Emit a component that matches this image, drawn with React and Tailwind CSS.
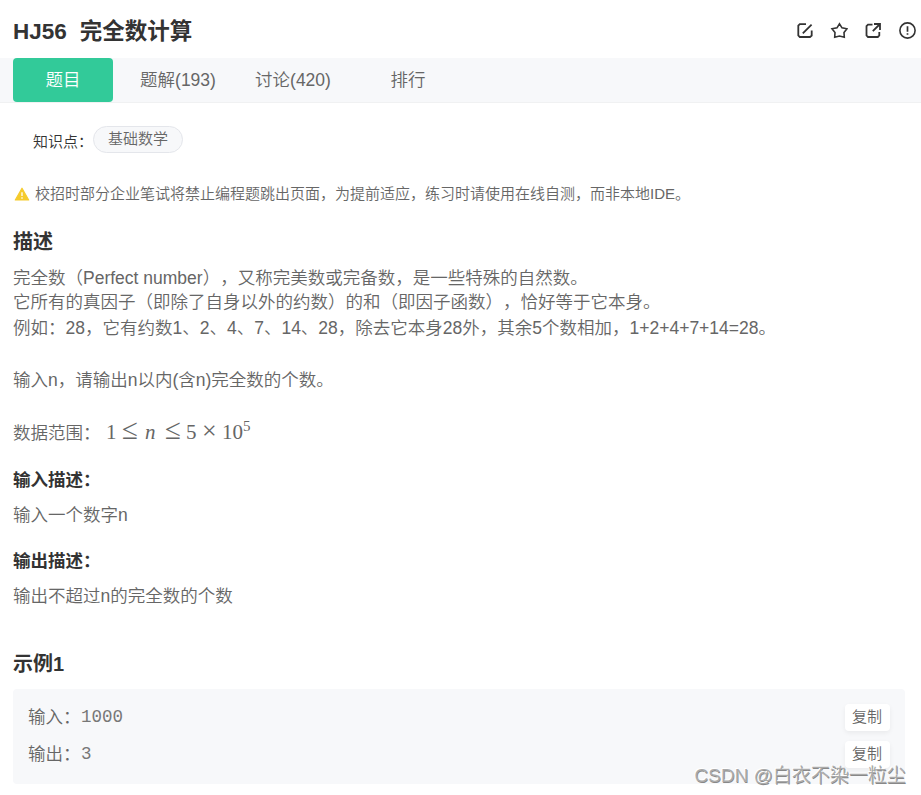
import React from "react";

const tabs = ["题目", "题解(193)", "讨论(420)", "排行"];

const examples = [
  { label: "输入：", value: "1000" },
  { label: "输出：", value: "3" },
];

const Icon = ({ children }) => (
  <svg
    className="w-[18px] h-[18px]"
    viewBox="0 0 18 18"
    fill="none"
    stroke="#333"
    strokeWidth="1.8"
  >
    {children}
  </svg>
);

const HeaderIcons = () => (
  <div className="flex items-center gap-4">
    <Icon>
      <path d="M10 2.200H3.800L2.300 3.700V13.500L3.800 15H14L15.700 13.500V8.500M6.800 11.400L15.600 2.600" />
    </Icon>
    <Icon>
      <path
        d="M9.500 1.800L12 5.800L17 6.800L14 10.500L14.300 15.200L9.500 14L4.700 15.200L5 10.500L2 6.800L7 5.800Z"
        strokeWidth="1.600"
      />
    </Icon>
    <Icon>
      <path d="M8.500 2.700H4L2.500 4.200V13.500L4 15H13.800L15.300 13.500V10M10 2H16V8M8.800 9.200L15.500 2.500" />
    </Icon>
    <Icon>
      <circle cx="9.500" cy="8.500" r="7.600" strokeWidth="1.600" />
      <path d="M9.500 4.300V9.700M9.500 11.200V12.800" strokeWidth="1.700" />
    </Icon>
  </div>
);

const WarningIcon = () => (
  <svg className="w-4 h-4 shrink-0" viewBox="0 0 16 16">
    <path
      d="M8 2.200L14.700 14H1.300Z"
      fill="#f5cb2d"
      stroke="#f5cb2d"
      strokeWidth="1.200"
      strokeLinejoin="round"
    />
    <path d="M8 6.300V10M8 11.300V12.700" stroke="#fff" strokeWidth="1.300" />
  </svg>
);

const Formula = () => (
  <span className="flex items-baseline font-['Liberation_Serif',serif] text-[21px] text-[#666]">
    <span className="w-4">1</span>
    <span className="w-[23px] text-[29px] leading-[0]">≤</span>
    <i className="w-5">n</i>
    <span className="w-[21px] text-[29px] leading-[0]">≤</span>
    <span className="w-4">5</span>
    <span className="w-5 text-[26px] leading-[0]">×</span>
    <span>10</span>
    <span className="relative -top-2 text-[15px] leading-[0]">5</span>
  </span>
);

const App = () => {
  return (
    <div className="relative w-[921px] h-[795px] overflow-hidden bg-white text-[17.5px] font-[350] text-[#666] whitespace-nowrap font-['Liberation_Sans','Noto_Sans_CJK_SC',sans-serif] [text-spacing-trim:space-all]">
      <header className="flex h-[58px] items-center justify-between pl-[13px] pr-[5px] pt-[3px]">
        <h1 className="flex gap-[13px] pt-0.5 text-[22.5px] font-bold text-[#333]">
          <span>HJ56</span>
          <span>完全数计算</span>
        </h1>
        <HeaderIcons />
      </header>

      <nav className="flex h-[45px] gap-[15px] border-b border-[#f0f1f2] bg-[#f7f8fa] pl-[13px]">
        {tabs.map((tab, index) => (
          <div
            key={tab}
            className={
              index === 0
                ? "flex h-11 w-[100px] items-center justify-center rounded bg-[#32ca99] text-white"
                : "flex h-11 w-[100px] items-center justify-center"
            }
          >
            {tab}
          </div>
        ))}
      </nav>

      <div className="flex h-[72px] items-center pl-[33px] text-[15px]">
        <span className="w-[60px] pt-1.5 text-[#333]">知识点：</span>
        <span className="flex h-[27px] w-[90px] items-center justify-center rounded-full border border-[#e4e6eb] bg-[#f7f8fa]">
          基础数学
        </span>
      </div>

      <div className="flex h-[38px] items-center gap-[5px] pl-[14px] text-[15px]">
        <WarningIcon />
        <span>校招时部分企业笔试将禁止编程题跳出页面，为提前适应，练习时请使用在线自测，而非本地IDE。</span>
      </div>

      <main className="px-[13px]">
        <h2 className="h-[52px] text-[20px] leading-[58px] font-bold text-[#333]">描述</h2>
        <p className="h-6 leading-[26px]">
          完全数（Perfect number），又称完美数或完备数，是一些特殊的自然数。
        </p>
        <p className="h-[26px] leading-[26px]">
          它所有的真因子（即除了自身以外的约数）的和（即因子函数），恰好等于它本身。
        </p>
        <p className="mb-[26px] h-[26px] leading-[26px]">
          例如：28，它有约数1、2、4、7、14、28，除去它本身28外，其余5个数相加，1+2+4+7+14=28。
        </p>
        <p className="mb-[26px] h-[26px] leading-[26px]">
          输入n，请输出n以内(含n)完全数的个数。
        </p>
        <div className="flex h-[26px] items-baseline leading-[26px]">
          <span className="w-[93px]">数据范围：</span>
          <Formula />
        </div>

        <h3 className="mt-[22px] h-[26px] leading-[26px] font-bold text-[#333]">输入描述：</h3>
        <p className="mt-[9px] h-[26px] leading-[26px]">输入一个数字n</p>
        <h3 className="mt-5 h-[26px] leading-[26px] font-bold text-[#333]">输出描述：</h3>
        <p className="mt-[9px] h-[26px] leading-[26px]">输出不超过n的完全数的个数</p>

        <h2 className="mt-[42px] h-[26px] text-[20px] leading-[26px] font-bold text-[#333]">示例1</h2>
        <div className="mt-[12px] h-[95px] w-[892px] rounded bg-[#f7f8fa] px-[15px] pt-[9px]">
          {examples.map((item) => (
            <div key={item.label} className="flex h-[37px] items-center pt-px">
              <span className="w-[53px]">{item.label}</span>
              <span className="grow font-['Liberation_Mono',monospace] text-[#777]">{item.value}</span>
              <button className="h-[27px] w-[45px] rounded-sm bg-white pr-px text-[15px] shadow-[0_2px_5px_rgba(0,0,0,0.06)]">
                复制
              </button>
            </div>
          ))}
        </div>
      </main>

      <div className="absolute right-[15px] bottom-[5px] text-[19px] leading-[28px] text-[#aaa] [text-shadow:-1px_-1px_0_#fff,0.5px_0.5px_0_#888]">
        CSDN @白衣不染一粒尘
      </div>
    </div>
  );
};

export default App;
